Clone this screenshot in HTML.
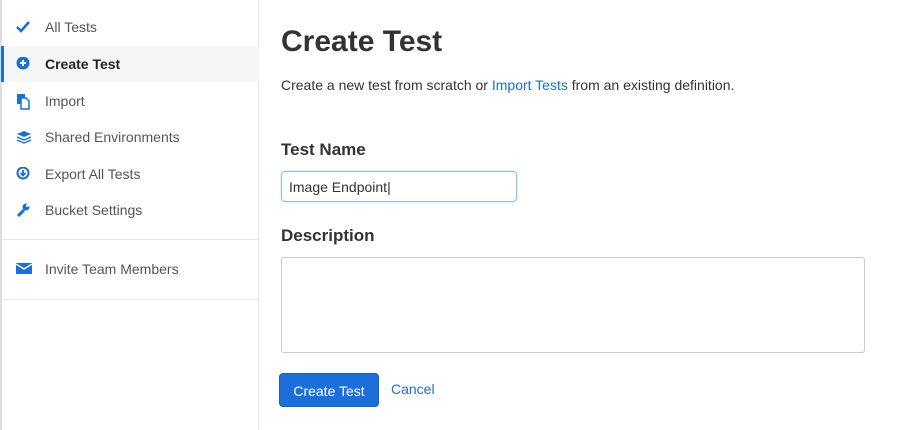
<!DOCTYPE html>
<html><head><style>
*{margin:0;padding:0;box-sizing:border-box}
body{width:900px;height:430px;background:#fff;font-family:"Liberation Sans",sans-serif;position:relative;overflow:hidden;color:#333}
.side{position:absolute;left:0;top:0;width:259px;height:430px;border-left:2px solid #ddd;border-right:1px solid #e6e6e6}
.item{position:absolute;left:0;width:257px;height:36px;font-size:14px;color:#555;}
.item span{position:absolute;left:43px;top:10px}
.item svg{position:absolute;left:14px;top:11px}
.active{background:#f6f6f6;color:#222;font-weight:bold}
.active:before{content:"";position:absolute;left:-1px;top:0;width:3px;height:36px;background:#1a6fd8}
.hr{position:absolute;left:0;width:257px;height:1px;background:#e6e6e6}
h1{position:absolute;left:281px;top:25px;font-size:30px;font-weight:bold;color:#333}
.lead{position:absolute;left:281px;top:77px;font-size:14px;color:#333}
a{color:#1a6fd8;text-decoration:none}
.lbl{position:absolute;left:281px;font-size:17px;font-weight:bold;color:#333}
.inp{position:absolute;left:281px;top:171px;width:236px;height:31px;border:1px solid #8fc0ee;border-radius:4px;box-shadow:0 0 2px #b8d8f6;font-size:14px;padding:7px 7px;color:#333}
.ta{position:absolute;left:281px;top:257px;width:584px;height:96px;border:1px solid #ccc;border-radius:3px}
.btn{position:absolute;left:279px;top:373px;width:100px;height:34px;background:#1a6fd8;border-radius:4px;color:#fff;font-size:14px;text-align:center;line-height:34px;border:1px solid #1560bd}
.cancel{position:absolute;left:391px;top:381px;font-size:14px}
</style></head><body>
<div class="side">
<div class="item" style="top:9px"><svg width="14" height="14" viewBox="0 0 14 14"><path d="M1 7l4 4 8-9" stroke="#1a6fd8" stroke-width="2.6" fill="none"/></svg><span>All Tests</span></div>
<div class="item active" style="top:46px"><svg width="14" height="14" viewBox="0 0 14 14"><circle cx="7" cy="6" r="6.5" fill="#1a6fd8"/><path d="M4 6h6M7 3v6" stroke="#fff" stroke-width="2"/></svg><span>Create Test</span></div>
<div class="item" style="top:83px"><svg width="14" height="16" viewBox="0 0 14 16"><rect x="1" y="0" width="8" height="10" fill="#1a6fd8"/><path d="M5 4h5l3 3v8H5z" fill="#fff" stroke="#1a6fd8" stroke-width="1.5"/></svg><span>Import</span></div>
<div class="item" style="top:119px"><svg width="16" height="14" viewBox="0 0 16 14"><path d="M8 1l7 3-7 3-7-3z" fill="#1a6fd8"/><path d="M1 7l7 3 7-3M1 10l7 3 7-3" stroke="#1a6fd8" stroke-width="1.4" fill="none"/></svg><span>Shared Environments</span></div>
<div class="item" style="top:156px"><svg width="14" height="14" viewBox="0 0 14 14"><circle cx="7" cy="6" r="5.5" fill="none" stroke="#1a6fd8" stroke-width="2"/><path d="M7 3v5M4.5 6l2.5 2.5L9.5 6" stroke="#1a6fd8" stroke-width="1.8" fill="none"/></svg><span>Export All Tests</span></div>
<div class="item" style="top:192px"><svg width="14" height="14" viewBox="0 0 14 14"><path d="M2 13l6-6" stroke="#1a6fd8" stroke-width="3"/><circle cx="10" cy="4" r="3.5" fill="#1a6fd8"/><circle cx="11.5" cy="2.5" r="1.5" fill="#fff"/></svg><span>Bucket Settings</span></div>
<div class="hr" style="top:239px"></div>
<div class="item" style="top:251px"><svg width="16" height="13" viewBox="0 0 16 13"><rect x="0" y="1" width="16" height="11" fill="#1a6fd8"/><path d="M0 2l8 5 8-5" stroke="#fff" stroke-width="1.4" fill="none"/></svg><span>Invite Team Members</span></div>
<div class="hr" style="top:299px"></div>
</div>
<h1>Create Test</h1>
<div class="lead">Create a new test from scratch or <a>Import Tests</a> from an existing definition.</div>
<div class="lbl" style="top:140px">Test Name</div>
<div class="inp">Image Endpoint|</div>
<div class="lbl" style="top:226px">Description</div>
<div class="ta"></div>
<div class="btn">Create Test</div>
<a class="cancel">Cancel</a>
</body></html>
